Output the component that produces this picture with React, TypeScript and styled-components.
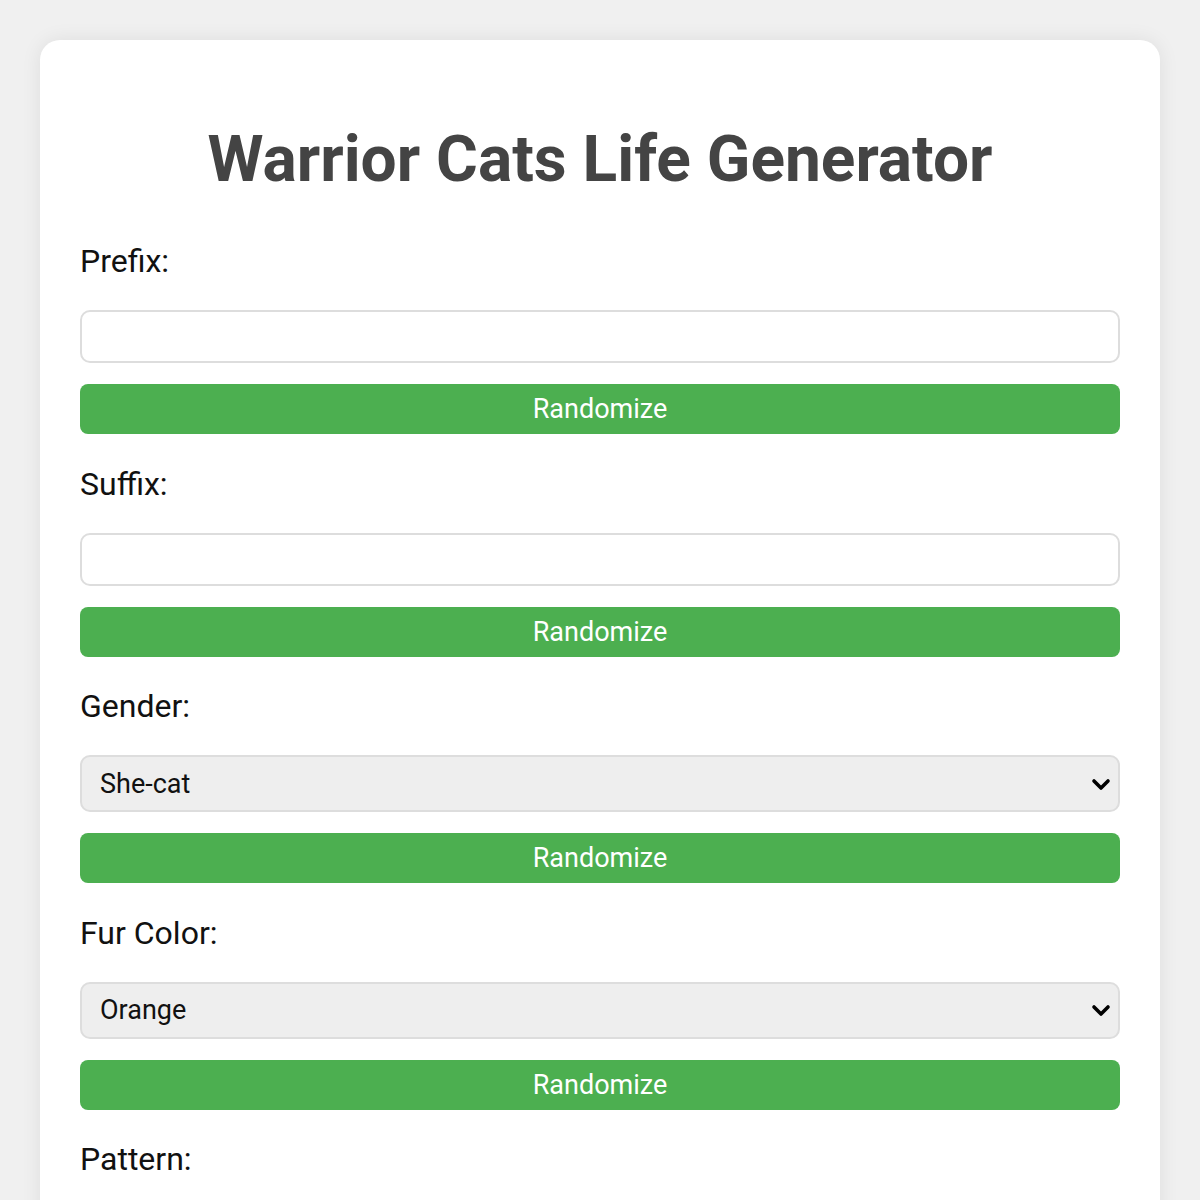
import React, { useState } from "react";
import styled, { createGlobalStyle } from "styled-components";

const GlobalStyle = createGlobalStyle`
  body {
    margin: 0;
    background: #f0f0f0;
    font-family: Roboto, "Liberation Sans", Arial, sans-serif;
  }
`;

const Page = styled.div`
  padding: 40px;
`;

const Card = styled.div`
  background: #fff;
  border-radius: 20px;
  box-shadow: 0 0 20px rgba(0, 0, 0, 0.08);
  padding: 40px;
`;

const Title = styled.h1`
  margin: 42px 0 45px;
  text-align: center;
  font-size: 64px;
  line-height: 76px;
  font-weight: 700;
  color: #444;
`;

const Field = styled.div`
  display: flex;
  flex-direction: column;
  margin-bottom: 31.5px;
`;

const Label = styled.label`
  font-size: 32px;
  line-height: 36px;
  color: #111;
  margin-bottom: 31px;
`;

const TextInput = styled.input`
  box-sizing: border-box;
  height: 53px;
  border: 2px solid #ddd;
  border-radius: 10px;
  background: #fff;
  padding: 0 18px;
  font-family: inherit;
  font-size: 27px;
  outline: none;
`;

const SelectWrap = styled.div`
  position: relative;
  display: flex;
`;

const Select = styled.select`
  flex: 1;
  box-sizing: border-box;
  height: 57px;
  border: 2px solid #ddd;
  border-radius: 10px;
  background: #eee;
  padding: 0 18px;
  font-family: inherit;
  font-size: 27px;
  color: #111;
  appearance: none;
  outline: none;
`;

const Chevron = styled.svg`
  position: absolute;
  right: 7px;
  top: 50%;
  transform: translateY(-50%);
  pointer-events: none;
`;

const RandomButton = styled.button`
  margin-top: 21px;
  height: 50px;
  border: none;
  border-radius: 8px;
  background: #4caf50;
  color: #fff;
  font-family: inherit;
  font-size: 27px;
  cursor: pointer;
`;

const prefixes = ["Fire", "Sand", "Gray", "Blue", "Thorn", "Leaf", "Bramble"];
const suffixes = ["star", "storm", "stripe", "claw", "fur", "pelt", "heart"];
const genders = ["She-cat", "Tom"];
const furColors = ["Orange", "Gray", "Black", "White", "Brown", "Cream"];
const patterns = ["Solid", "Tabby", "Tortoiseshell", "Calico", "Spotted"];

const pick = (list: string[]) => list[Math.floor(Math.random() * list.length)];

const ChevronIcon = () => (
  <Chevron width="24" height="24" viewBox="0 0 24 24">
    <path
      d="M5 9l7 7 7-7"
      fill="none"
      stroke="#000"
      strokeWidth="3.6"
      strokeLinecap="round"
      strokeLinejoin="round"
    />
  </Chevron>
);

const SelectField: React.FC<{
  label: string;
  options: string[];
  value: string;
  onChange: (v: string) => void;
}> = ({ label, options, value, onChange }) => (
  <Field>
    <Label>{label}</Label>
    <SelectWrap>
      <Select value={value} onChange={(e) => onChange(e.target.value)}>
        {options.map((o) => (
          <option key={o}>{o}</option>
        ))}
      </Select>
      <ChevronIcon />
    </SelectWrap>
    <RandomButton onClick={() => onChange(pick(options))}>Randomize</RandomButton>
  </Field>
);

const App: React.FC = () => {
  const [prefix, setPrefix] = useState("");
  const [suffix, setSuffix] = useState("");
  const [gender, setGender] = useState("She-cat");
  const [fur, setFur] = useState("Orange");
  const [pattern, setPattern] = useState("Solid");

  return (
    <>
      <GlobalStyle />
      <Page>
        <Card>
          <Title>Warrior Cats Life Generator</Title>

          <Field>
            <Label>Prefix:</Label>
            <TextInput value={prefix} onChange={(e) => setPrefix(e.target.value)} />
            <RandomButton onClick={() => setPrefix(pick(prefixes))}>Randomize</RandomButton>
          </Field>

          <Field>
            <Label>Suffix:</Label>
            <TextInput value={suffix} onChange={(e) => setSuffix(e.target.value)} />
            <RandomButton onClick={() => setSuffix(pick(suffixes))}>Randomize</RandomButton>
          </Field>

          <SelectField label="Gender:" options={genders} value={gender} onChange={setGender} />
          <SelectField label="Fur Color:" options={furColors} value={fur} onChange={setFur} />
          <SelectField label="Pattern:" options={patterns} value={pattern} onChange={setPattern} />
        </Card>
      </Page>
    </>
  );
};

export default App;
